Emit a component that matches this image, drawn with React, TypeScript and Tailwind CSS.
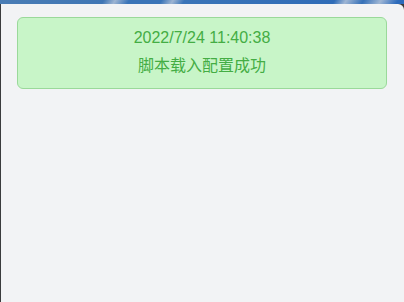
export default function App() {
  return (
    <main className="w-[404px] h-[302px] flex flex-col overflow-hidden bg-[#3a3b3d]">
      <div className="h-[4px] shrink-0 bg-[linear-gradient(120deg,#4a7db5_0px,#3f76b5_90px,#9db4d2_100px,#3a74b8_112px,#3a74b8_140px,#9db4d2_150px,#3a74b8_160px,#2f6cb8_290px,#9fb6d4_300px,#3570b8_315px,#9fb6d4_330px,#2c6abb_345px,#2c6abb_404px)]" />
      <div className="flex-1 ml-[1px] bg-[#f2f3f5] rounded-tr-[6px] pt-[13px] pl-[16px] pr-[17px]">
        <div
          className="rounded-[6px] border border-[#9ad99a] bg-[#c8f5c8] pt-[6px] pb-[8px] text-center text-[16px] leading-[28px] text-[#44ad44]"
          style={{ fontFamily: '"Liberation Sans", "Noto Sans CJK SC", sans-serif' }}
        >
          <div>2022/7/24 11:40:38</div>
          <div>脚本载入配置成功</div>
        </div>
      </div>
    </main>
  );
}
